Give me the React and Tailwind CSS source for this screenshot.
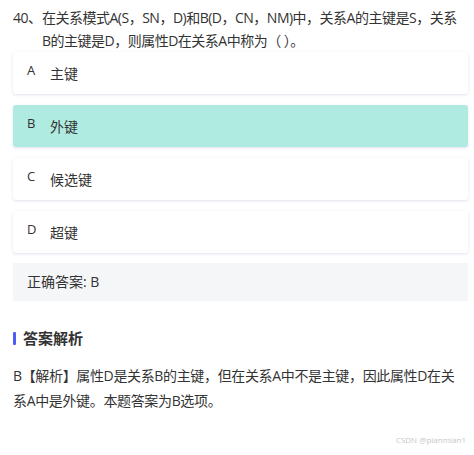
export default function App() {
  const options = [
    { k: "A", t: "主键", sel: false },
    { k: "B", t: "外键", sel: true },
    { k: "C", t: "候选键", sel: false },
    { k: "D", t: "超键", sel: false },
  ];
  return (
    <div className="w-[474px] h-[455px] bg-white text-[#333] relative overflow-hidden font-['Open_Sans','Noto_Sans_CJK_SC',sans-serif]">
      <div className="pl-[13px] pr-[6px] pt-[6px]">
        <div className="flex text-[14px] leading-[23px] tracking-[-0.5px] pr-[4px]">
          <span className="shrink-0 w-[29px]">40、</span>
          <span>在关系模式A(S，SN，D)和B(D，CN，NM)中，关系A的主键是S，关系B的主键是D，则属性D在关系A中称为（ ）。</span>
        </div>
        <div className="mt-[0px] flex flex-col gap-[11px]">
          {options.map((o) => (
            <div
              key={o.k}
              className={`h-[42px] rounded-[3px] flex items-center pl-[14px] shadow-[0_1px_3px_rgba(120,120,180,0.22)] ${o.sel ? "bg-[#b0ebe1]" : "bg-white"}`}
            >
              <span className="w-[23px] text-[13px] -mt-[4px]">{o.k}</span>
              <span className="text-[14px]">{o.t}</span>
            </div>
          ))}
          <div className="h-[37px] mt-[-1px] bg-[#f5f6f8] flex items-center pl-[14px] text-[14px] shadow-[0_1px_1px_rgba(0,0,0,0.04)]">
            正确答案: B
          </div>
        </div>
        <div className="mt-[27px] flex items-center gap-[7px]">
          <span className="w-[3px] h-[13px] bg-[#4f5cf5] rounded-[1px]"></span>
          <span className="text-[15px] font-bold">答案解析</span>
        </div>
        <div className="mt-[13px] text-[14px] leading-[25px] tracking-[-0.35px] pr-[7px]">
          B【解析】属性D是关系B的主键，但在关系A中不是主键，因此属性D在关系A中是外键。本题答案为B选项。
        </div>
      </div>
      <div className="absolute right-[8px] bottom-[9px] text-[8px] text-[#c8c8c8]">CSDN @pianmian1</div>
    </div>
  );
}
